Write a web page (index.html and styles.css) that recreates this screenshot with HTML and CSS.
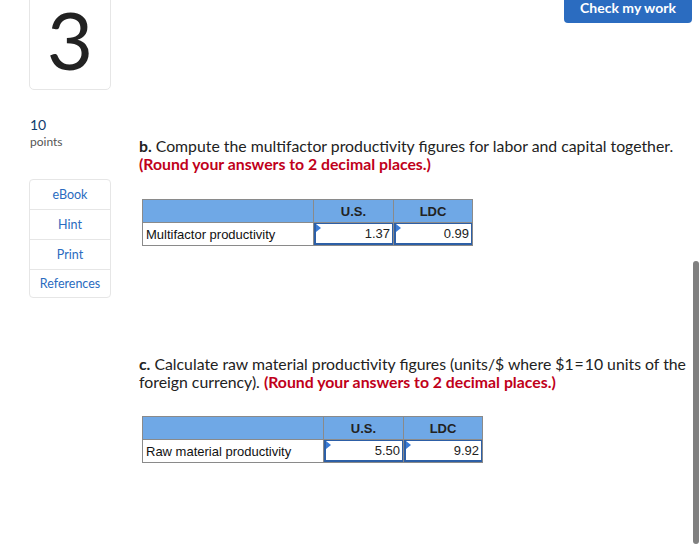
FILE: index.html
```html
<!DOCTYPE html>
<html>
<head>
<meta charset="utf-8">
<link rel="stylesheet" href="styles.css">
</head>
<body>
<div class="page">
  <aside class="side">
    <div class="qnum">3</div>
    <div class="points">
      <div class="pts-num">10</div>
      <div class="pts-label">points</div>
    </div>
    <nav class="tools">
      <div class="tool">eBook</div>
      <div class="tool">Hint</div>
      <div class="tool">Print</div>
      <div class="tool">References</div>
    </nav>
  </aside>
  <main class="content">
    <div class="topbar"><button class="check">Check my work</button></div>
    <section class="part part-b">
      <p class="prompt"><b>b.</b> Compute the multifactor productivity figures for labor and capital together. <span class="round">(Round your answers to 2 decimal places.)</span></p>
      <table class="grid grid-b">
        <tr class="head"><th class="c1"></th><th class="c2">U.S.</th><th class="c3">LDC</th></tr>
        <tr><td class="label">Multifactor productivity</td><td class="inp"><div class="box">1.37</div></td><td class="inp"><div class="box">0.99</div></td></tr>
      </table>
    </section>
    <section class="part part-c">
      <p class="prompt"><b>c.</b> Calculate raw material productivity figures (units/$ where $1&#8202;=&#8202;10 units of the foreign currency). <span class="round">(Round your answers to 2 decimal places.)</span></p>
      <table class="grid grid-c">
        <tr class="head"><th class="c1"></th><th class="c2">U.S.</th><th class="c3">LDC</th></tr>
        <tr><td class="label">Raw material productivity</td><td class="inp"><div class="box">5.50</div></td><td class="inp"><div class="box">9.92</div></td></tr>
      </table>
    </section>
  </main>
  <div class="scrollbar"></div>
</div>
</body>
</html>
```

FILE: styles.css
```css
* { box-sizing: border-box; }
html, body { margin: 0; padding: 0; background: #fff; }
body { font-family: Lato, "Open Sans", sans-serif; color: #222; overflow: hidden; }
.page { display: flex; width: 699px; height: 552px; position: relative; }
.side { width: 111px; padding-left: 29px; flex: none; }
.qnum {
  margin-top: -12px;
  height: 102px;
  border: 1px solid #e6e6e6;
  border-radius: 5px;
  display: flex; align-items: center; justify-content: center;
  font-size: 80px; line-height: 96px; color: #222; font-weight: 400;
  padding-top: 0;
}
.points { margin-top: 27px; padding-left: 1px; }
.pts-num { font-size: 14px; color: #0f3d6e; line-height: 16px; }
.pts-label { font-size: 12px; color: #555; line-height: 15px; margin-top: 1px; }
.tools {
  margin-top: 30px;
  border: 1px solid #e6e6e6;
  border-radius: 4px;
}
.tool {
  height: 30px; display: flex; align-items: center; justify-content: center;
  font-size: 12.5px; color: #2a6bc0; border-top: 1px solid #e6e6e6;
}
.tool:first-child { border-top: none; height: 29px; }
.tool:last-child { height: 28px; }
.content { flex: 1; padding-left: 28px; }
.topbar { display: flex; justify-content: flex-end; padding-right: 7px; height: 23px; }
.check {
  width: 128px; height: 23px; border: none; border-radius: 0 0 4px 4px;
  background: #2b6cc0; color: #fff; font-family: Lato, "Open Sans", sans-serif;
  font-weight: 700; font-size: 14px; line-height: 16px; padding: 0 0 7px 0;
}
.prompt { margin: 0; font-size: 15.8px; line-height: 18px; color: #222; padding-right: 6px; }
.prompt b { font-weight: 700; }
.round { color: #c0001a; font-weight: 700; }
.part-b { margin-top: 114px; }
.part-c { margin-top: 109px; }
.grid { border-collapse: collapse; margin-left: 3px; font-family: "Liberation Sans", Arial, sans-serif; font-size: 13px; }
.grid-b { margin-top: 26px; }
.grid-c { margin-top: 25px; }
.grid th, .grid td { border: 1px solid #8a8a8a; padding: 0; }
.head th { background: #6fa8e6; height: 23px; font-weight: 700; color: #222; text-align: center; }
.grid-b .c1 { width: 171px; }
.grid-c .c1 { width: 181px; }
.c2 { width: 80px; }
.c3 { width: 79px; }
.grid td { height: 23px; }
.label { padding-left: 3px !important; color: #111; }
.inp { position: relative; }
.box {
  height: 22px; border: 1px solid #2d5fa6; border-left-width: 2px; border-bottom-width: 2px;
  text-align: right; padding-right: 2px; line-height: 19px; color: #222; position: relative;
}
.box::before {
  content: ""; position: absolute; left: 0; top: 0;
  border-top: 4px solid transparent; border-bottom: 4px solid transparent;
  border-left: 5px solid #3a7bd5;
}
.scrollbar {
  position: absolute; left: 693px; top: 261px; width: 6px; height: 283px;
  background: #808080; border-radius: 3px;
}
```
